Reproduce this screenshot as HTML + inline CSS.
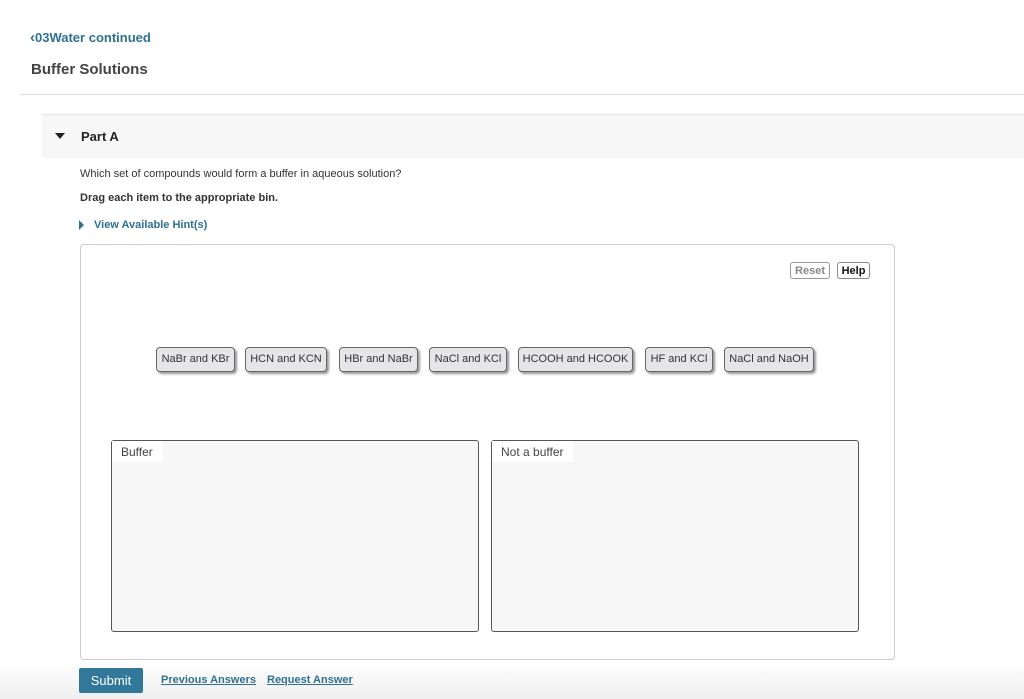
<!DOCTYPE html><html><head><style>
body{margin:0;width:1024px;height:699px;background:#fff;font-family:"Liberation Sans",sans-serif;position:relative;overflow:hidden}
.a{position:absolute}
.chip{position:absolute;top:347px;border:1px solid #666;border-radius:4px;background:#e6e6e9;box-shadow:2px 2px 2px #999;font-size:11px;color:#333;line-height:23px;text-align:center;box-sizing:border-box;height:25px}
.bin{position:absolute;top:440px;width:368px;height:192px;border:1px solid #555;border-radius:3px;background:#f7f7f7;box-sizing:border-box}
.bin span{position:absolute;left:0;top:0;background:#fff;padding:4px 10px 3px 9px;font-size:12px;color:#444}
</style></head><body>
<div class="a" style="left:30px;top:30px;font-size:13px;font-weight:bold;color:#2e7192"><span style="font-size:15px;line-height:13px">&#x2039;</span>03Water continued</div>
<div class="a" style="left:31px;top:61px;font-size:15px;font-weight:bold;color:#444">Buffer Solutions</div>
<div class="a" style="left:20px;top:94px;width:1004px;height:1px;background:#ddd"></div>
<div class="a" style="left:42px;top:114px;width:982px;height:43px;background:#f7f7f7;border-top:1px solid #e6e6e6"></div>
<div class="a" style="left:55px;top:133px;width:0;height:0;border-left:5px solid transparent;border-right:5px solid transparent;border-top:6px solid #222"></div>
<div class="a" style="left:81px;top:129px;font-size:13px;font-weight:bold;color:#222">Part A</div>
<div class="a" style="left:80px;top:168px;font-size:11px;color:#333">Which set of compounds would form a buffer in aqueous solution?</div>
<div class="a" style="left:80px;top:192px;font-size:11px;font-weight:bold;color:#333">Drag each item to the appropriate bin.</div>
<div class="a" style="left:79px;top:220px;width:0;height:0;border-top:5px solid transparent;border-bottom:5px solid transparent;border-left:5px solid #2e7192"></div>
<div class="a" style="left:94px;top:219px;font-size:11px;font-weight:bold;color:#2e7192">View Available Hint(s)</div>
<div class="a" style="left:80px;top:244px;width:815px;height:416px;border:1px solid #ccc;border-radius:4px;box-sizing:border-box"></div>
<div class="a" style="left:790px;top:262px;width:40px;height:17px;border:1px solid #999;border-radius:3px;font-size:11px;font-weight:bold;color:#888;text-align:center;line-height:16px;box-sizing:border-box">Reset</div>
<div class="a" style="left:837px;top:262px;width:33px;height:17px;border:1px solid #888;border-radius:3px;font-size:11px;font-weight:bold;color:#111;text-align:center;line-height:16px;box-sizing:border-box">Help</div>
<div class="chip" style="left:156px;width:79px">NaBr and KBr</div>
<div class="chip" style="left:245px;width:82px">HCN and KCN</div>
<div class="chip" style="left:339px;width:79px">HBr and NaBr</div>
<div class="chip" style="left:429px;width:78px">NaCl and KCl</div>
<div class="chip" style="left:518px;width:115px">HCOOH and HCOOK</div>
<div class="chip" style="left:645px;width:68px">HF and KCl</div>
<div class="chip" style="left:724px;width:90px">NaCl and NaOH</div>
<div class="bin" style="left:111px"><span>Buffer</span></div>
<div class="bin" style="left:491px"><span>Not a buffer</span></div>
<div class="a" style="left:0;top:662px;width:1024px;height:37px;background:linear-gradient(#fff,#efefef)"></div>
<div class="a" style="left:79px;top:668px;width:64px;height:25px;background:#31789a;border-radius:2px;color:#fff;font-size:13px;text-align:center;line-height:25px">Submit</div>
<div class="a" style="left:161px;top:674px;font-size:11px;font-weight:bold;color:#2e7192;text-decoration:underline">Previous Answers</div>
<div class="a" style="left:267px;top:674px;font-size:11px;font-weight:bold;color:#2e7192;text-decoration:underline">Request Answer</div>
</body></html>
